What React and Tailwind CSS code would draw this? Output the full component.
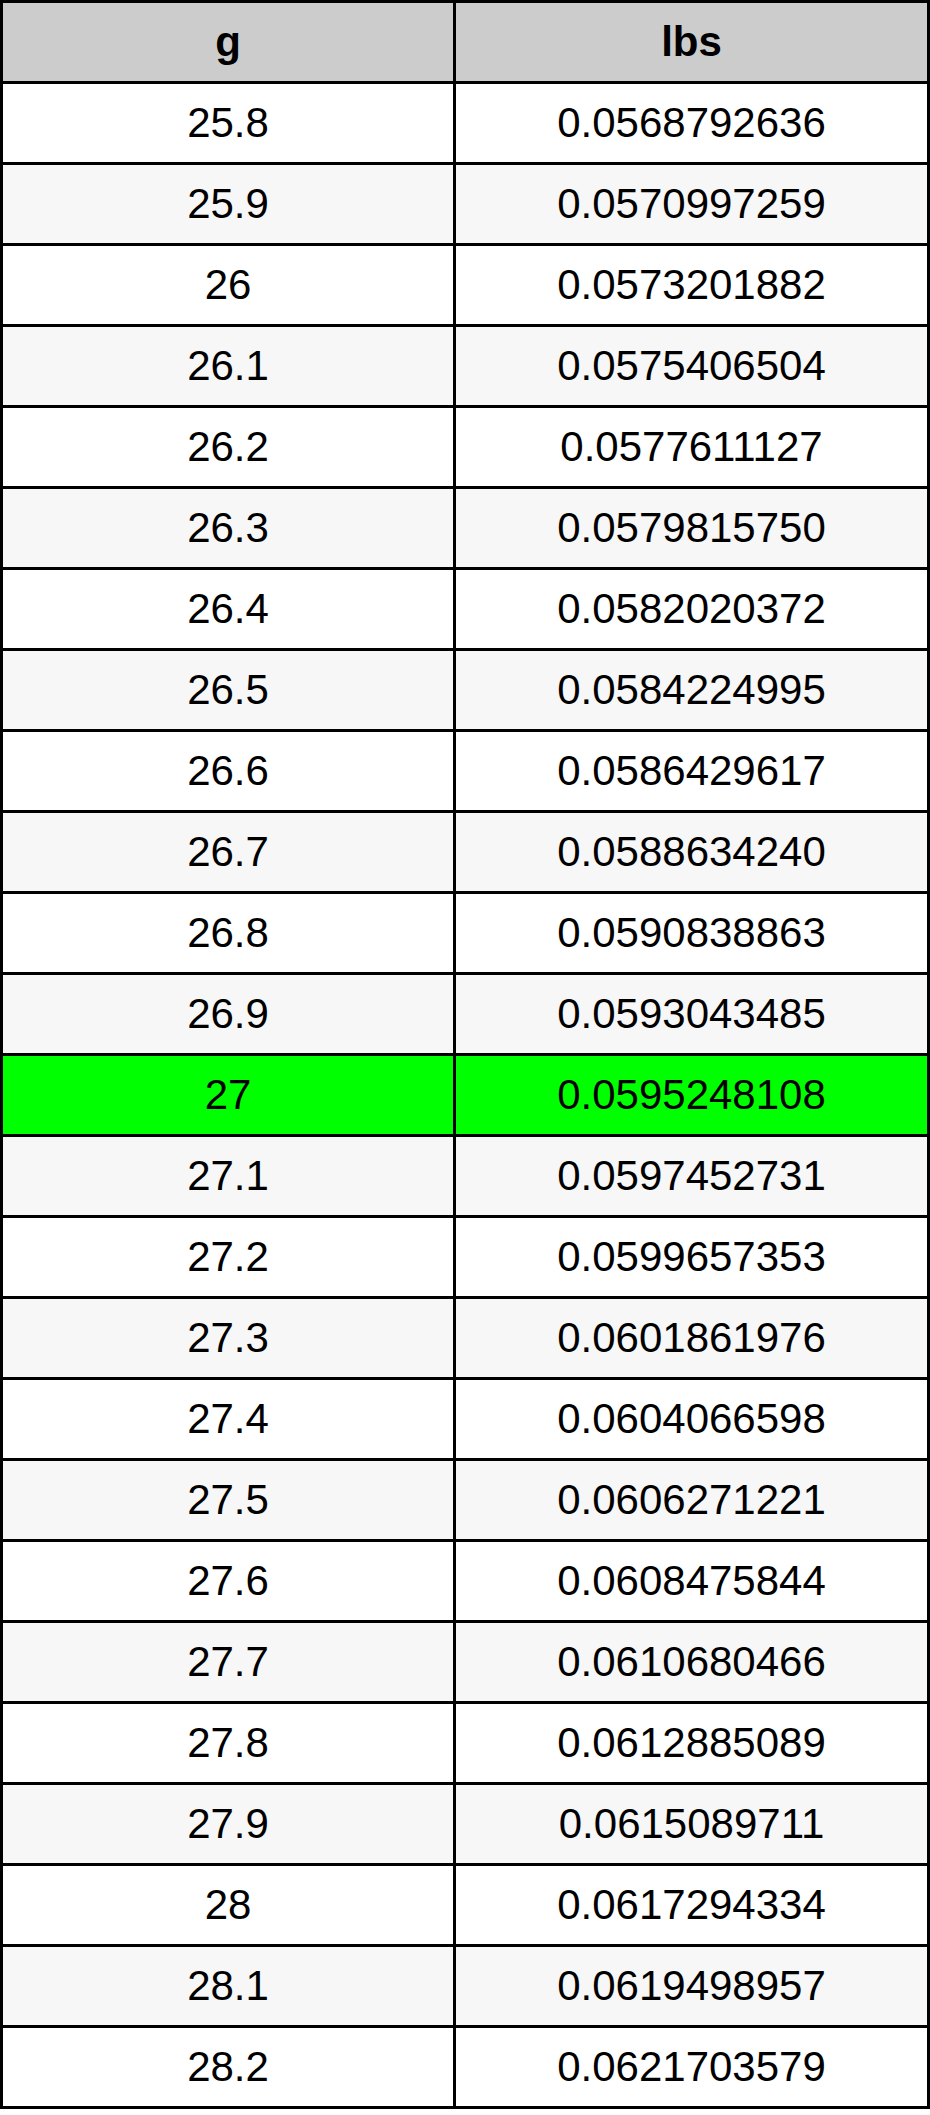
import React from 'react';

const ROWS = [
  ['25.8', '0.0568792636'],
  ['25.9', '0.0570997259'],
  ['26', '0.0573201882'],
  ['26.1', '0.0575406504'],
  ['26.2', '0.0577611127'],
  ['26.3', '0.0579815750'],
  ['26.4', '0.0582020372'],
  ['26.5', '0.0584224995'],
  ['26.6', '0.0586429617'],
  ['26.7', '0.0588634240'],
  ['26.8', '0.0590838863'],
  ['26.9', '0.0593043485'],
  ['27', '0.0595248108'],
  ['27.1', '0.0597452731'],
  ['27.2', '0.0599657353'],
  ['27.3', '0.0601861976'],
  ['27.4', '0.0604066598'],
  ['27.5', '0.0606271221'],
  ['27.6', '0.0608475844'],
  ['27.7', '0.0610680466'],
  ['27.8', '0.0612885089'],
  ['27.9', '0.0615089711'],
  ['28', '0.0617294334'],
  ['28.1', '0.0619498957'],
  ['28.2', '0.0621703579'],
];

const Cell = ({ children, className }) => (
  <div className={`h-[78px] flex items-center justify-center ${className}`}>{children}</div>
);

const App = () => {
  return (
    <div className="w-[930px] bg-white" style={{ fontFamily: '"Liberation Sans", Arial, sans-serif' }}>
      <div className="bg-black p-[3px] grid grid-cols-[450px_471px] gap-[3px] text-[42px] text-black leading-none">
        <Cell className="bg-[#cccccc] font-bold">g</Cell>
        <Cell className="bg-[#cccccc] font-bold">lbs</Cell>
        {ROWS.map(([g, lbs], i) => {
          const bg = g === '27' ? 'bg-[#00ff00]' : i % 2 === 0 ? 'bg-white' : 'bg-[#f7f7f7]';
          return (
            <React.Fragment key={g}>
              <Cell className={bg}>{g}</Cell>
              <Cell className={bg}>{lbs}</Cell>
            </React.Fragment>
          );
        })}
      </div>
    </div>
  );
};

export default App;
